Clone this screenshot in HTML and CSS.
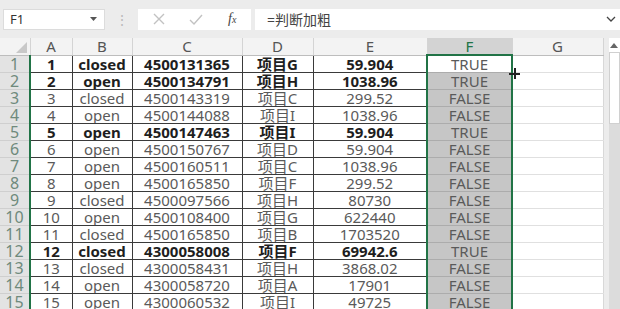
FILE: index.html
```html
<!DOCTYPE html>
<html lang="zh">
<head>
    <meta charset="UTF-8">
    <title>判断加粗</title>
    <link rel="stylesheet" href="styles.css">
</head>
<body>
    <div class="formula-bar">
        <div class="name-box">
            <span>F1</span>
            <svg width="9" height="6" viewBox="0 0 9 6"><path d="M1 1 L4.5 5 L8 1 Z" fill="#555"/></svg>
        </div>
        <div class="sep">⋮</div>
        <div class="fx-buttons">
            <svg width="14" height="14" viewBox="0 0 14 14"><path d="M2 2 L12 12 M12 2 L2 12" stroke="#c2c2c2" stroke-width="1.4"/></svg>
            <svg width="16" height="14" viewBox="0 0 16 14"><path d="M2 8 L6 12 L14 3" stroke="#c2c2c2" stroke-width="1.4" fill="none"/></svg>
            <span class="fx">f<small>x</small></span>
        </div>
        <div class="formula-input">
            <span>=判断加粗</span>
            <svg width="10" height="6" viewBox="0 0 10 6"><path d="M1 1 L5 5 L9 1" stroke="#444" stroke-width="1.3" fill="none"/></svg>
        </div>
    </div>

    <div class="sheet">
        <table class="grid">
            <colgroup>
                <col style="width:30px"><col style="width:42px"><col style="width:60px">
                <col style="width:110px"><col style="width:71px"><col style="width:114px">
                <col style="width:85px"><col style="width:91px">
            </colgroup>
            <thead>
                <tr>
                    <th class="corner"><span></span></th>
                    <th>A</th><th>B</th><th>C</th><th>D</th><th>E</th>
                    <th class="sel">F</th><th>G</th>
                </tr>
            </thead>
            <tbody id="rows"></tbody>
        </table>
        <div class="scrollbar">
            <div class="arrow">
                <svg width="8" height="5" viewBox="0 0 8 5"><path d="M0 5 L4 0 L8 5 Z" fill="#666"/></svg>
            </div>
            <div class="thumb"></div>
        </div>
        <div class="fill-cursor"></div>
    </div>

    <script>
        // 数据：序号, 状态, 单号, 项目, 金额, 是否加粗
        const data = [
            [1, 'closed', '4500131365', '项目G', '59.904', true],
            [2, 'open', '4500134791', '项目H', '1038.96', true],
            [3, 'closed', '4500143319', '项目C', '299.52', false],
            [4, 'open', '4500144088', '项目I', '1038.96', false],
            [5, 'open', '4500147463', '项目I', '59.904', true],
            [6, 'open', '4500150767', '项目D', '59.904', false],
            [7, 'open', '4500160511', '项目C', '1038.96', false],
            [8, 'open', '4500165850', '项目F', '299.52', false],
            [9, 'closed', '4500097566', '项目H', '80730', false],
            [10, 'open', '4500108400', '项目G', '622440', false],
            [11, 'closed', '4500165850', '项目B', '1703520', false],
            [12, 'closed', '4300058008', '项目F', '69942.6', true],
            [13, 'closed', '4300058431', '项目H', '3868.02', false],
            [14, 'open', '4300058720', '项目A', '17901', false],
            [15, 'open', '4300060532', '项目I', '49725', false]
        ];

        const tbody = document.getElementById('rows');
        data.forEach((row, i) => {
            const tr = document.createElement('tr');
            if (row[5]) tr.className = 'bold';
            let html = `<td class="rh">${i + 1}</td>`;
            for (let c = 0; c < 5; c++) {
                html += `<td class="cell">${row[c]}</td>`;
            }
            html += `<td class="f${i === 0 ? ' active' : ''}">${row[5] ? 'TRUE' : 'FALSE'}</td>`;
            html += `<td class="g"></td>`;
            tr.innerHTML = html;
            tbody.appendChild(tr);
        });
    </script>
</body>
</html>
```

FILE: styles.css
```css
body {
    margin: 0;
    background-color: #ececec;
    font-family: "Noto Sans", "Noto Sans CJK SC", sans-serif;
    color: #333;
    width: 620px;
    height: 309px;
    overflow: hidden;
}

.formula-bar {
    display: flex;
    align-items: center;
    height: 38px;
    padding-left: 3px;
    box-sizing: border-box;
}

.name-box {
    width: 102px;
    height: 21px;
    background-color: #fff;
    border: 1px solid #dcdcdc;
    box-sizing: border-box;
    display: flex;
    align-items: center;
    justify-content: space-between;
    padding: 0 6px 0 6px;
    font-size: 13px;
}

.sep {
    width: 33px;
    text-align: center;
    color: #bbb;
    font-size: 14px;
}

.fx-buttons {
    width: 113px;
    height: 21px;
    background-color: #fff;
    display: flex;
    align-items: center;
    gap: 22px;
    padding-left: 14px;
    box-sizing: border-box;
}

.fx {
    font-family: "Liberation Serif", serif;
    font-style: italic;
    font-size: 14px;
    color: #444;
    margin-left: 2px;
}

.fx small {
    font-size: 10px;
}

.formula-input {
    flex: 1;
    height: 21px;
    margin-left: 4px;
    background-color: #fff;
    display: flex;
    align-items: center;
    justify-content: space-between;
    padding: 0 4px 0 12px;
    font-size: 14px;
    color: #444;
}

.sheet {
    position: relative;
    display: flex;
    gap: 5px;
}

.grid {
    table-layout: fixed;
    border-collapse: collapse;
    width: 603px;
    background-color: #fff;
    font-size: 15px;
}

.grid th,
.grid td {
    height: 16px;
    padding: 0;
    line-height: 16px;
    text-align: center;
    white-space: nowrap;
    overflow: hidden;
}

.grid th {
    background-color: #f3f3f3;
    font-weight: normal;
    color: #555;
    border-right: 1px solid #d4d4d4;
    border-bottom: 1px solid #bdbdbd;
}

.grid th.sel {
    background-color: #d3d3d3;
    color: #217346;
    border-bottom: 2px solid #217346;
}

.grid th.corner {
    background-color: #f3f3f3;
    position: relative;
}

.corner span {
    position: absolute;
    right: 3px;
    bottom: 2px;
    border-left: 11px solid transparent;
    border-bottom: 11px solid #c8c8c8;
}

.grid td.rh {
    background-color: #e3e3e3;
    color: #6f8a7c;
    font-size: 16px;
    border-right: 2px solid #217346;
    border-bottom: 1px solid #cfcfcf;
}

.grid td.cell {
    border: 1px solid #3a3a3a;
    color: #5a5a5a;
}

.grid tr.bold td.cell {
    font-weight: bold;
    color: #1e1e1e;
}

.grid td.f {
    background-color: #c6c6c6;
    color: #5a5a5a;
    border-left: 2px solid #217346;
    border-right: 2px solid #217346;
    border-bottom: 1px solid #acacac;
}

.grid td.f.active {
    background-color: #fff;
    border-top: 2px solid #217346;
}

.grid td.g {
    border-bottom: 1px solid #e0e0e0;
    border-right: 1px solid #d8d8d8;
}

.scrollbar {
    width: 12px;
    background-color: #dcdcdc;
    display: flex;
    flex-direction: column;
}

.scrollbar .arrow {
    height: 14px;
    background-color: #fff;
    border-bottom: 1px solid #d0d0d0;
    display: flex;
    align-items: center;
    justify-content: center;
}

.scrollbar .thumb {
    height: 70px;
    background-color: #fff;
    border: 1px solid #d0d0d0;
    border-top: none;
}

.fill-cursor {
    position: absolute;
    left: 509px;
    top: 30px;
    width: 11px;
    height: 11px;
    background:
        linear-gradient(#222, #222) center / 11px 2px no-repeat,
        linear-gradient(#222, #222) center / 2px 11px no-repeat;
}
```
